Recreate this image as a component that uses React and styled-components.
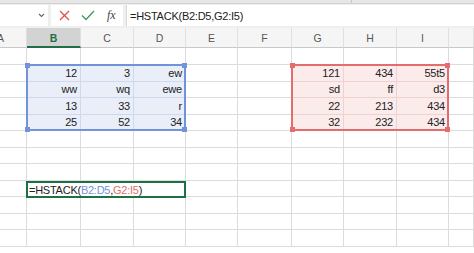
import React from 'react';
import styled, { createGlobalStyle, css } from 'styled-components';

const GlobalStyle = createGlobalStyle`
  html, body {
    margin: 0;
    padding: 0;
    background: #ffffff;
    overflow: hidden;
  }
  body {
    font-family: "Liberation Sans", Arial, sans-serif;
  }
`;

const color = {
  grid: '#dcdcdc',
  header: '#f5f5f5',
  headerText: '#555555',
  green: '#1e6f43',
  blue: '#7193d9',
  blueFill: '#e9eef9',
  blueGrid: '#cfd8ec',
  red: '#e46c6c',
  redFill: '#fcebeb',
  redGrid: '#eed2d2',
};

// A is scrolled partly out of view, the last column runs past the right edge
const colWidths = [27, 54, 53, 52, 52, 54, 52, 53, 52, 25];
const rowHeights = [17, 17, 16, 17, 16, 17, 16, 17, 16, 17, 16, 17];
const letters = ['A', 'B', 'C', 'D', 'E', 'F', 'G', 'H', 'I', ''];

const data = {
  B2: '12', C2: '3', D2: 'ew',
  B3: 'ww', C3: 'wq', D3: 'ewe',
  B4: '13', C4: '33', D4: 'r',
  B5: '25', C5: '52', D5: '34',
  G2: '121', H2: '434', I2: '55t5',
  G3: 'sd', H3: 'ff', I3: 'd3',
  G4: '22', H4: '213', I4: '434',
  G5: '32', H5: '232', I5: '434',
};

const rangeOf = (col, row) => {
  if (row >= 2 && row <= 5 && col >= 1 && col <= 3) return 'blue';
  if (row >= 2 && row <= 5 && col >= 6 && col <= 8) return 'red';
  return null;
};

const Page = styled.div`
  width: 474px;
  height: 253px;
  display: flex;
  flex-direction: column;
  overflow: hidden;
`;

const RibbonEdge = styled.div`
  height: 3px;
  background: #e6e6e6;
  border-bottom: 1px solid #d2d2d2;
  display: flex;
  justify-content: flex-end;
  padding-right: 122px;
`;

const RibbonDivider = styled.div`
  width: 1px;
  background: #c8c8c8;
`;

const FormulaBar = styled.div`
  height: 24px;
  box-sizing: border-box;
  padding: 1px 0 2px;
  background: #efefef;
  display: flex;
  gap: 3px;
`;

const NameBox = styled.div`
  width: 48px;
  background: #ffffff;
  display: flex;
  align-items: center;
  justify-content: flex-end;
  padding-right: 3px;
  box-sizing: border-box;
`;

const FnButtons = styled.div`
  width: 72px;
  background: #ffffff;
  display: flex;
  align-items: center;
  padding-left: 8px;
  gap: 11px;
  box-sizing: border-box;
`;

const FxLabel = styled.span`
  font-family: "Liberation Serif", "Times New Roman", serif;
  font-style: italic;
  font-size: 12px;
  color: #444;
  margin-left: 1px;
`;

const FormulaInput = styled.div`
  flex: 1;
  background: #ffffff;
  border-left: 1px solid #d8d8d8;
  display: flex;
  align-items: center;
  padding-left: 3px;
  font-size: 11px;
  letter-spacing: -0.25px;
  color: #222;
`;

const Sheet = styled.div`
  display: grid;
  grid-template-columns: ${colWidths.map((w) => `${w}px`).join(' ')};
  grid-template-rows: 20px ${rowHeights.map((h) => `${h}px`).join(' ')};
`;

const HeaderCell = styled.div`
  grid-column: ${(p) => p.col + 1};
  grid-row: 1;
  box-sizing: border-box;
  background: ${(p) => (p.active ? '#d3d3d3' : color.header)};
  border-right: 1px solid #e0e0e0;
  border-bottom: ${(p) => (p.active ? `2px solid ${color.green}` : '1px solid #c9c9c9')};
  color: ${(p) => (p.active ? color.green : color.headerText)};
  font-weight: ${(p) => (p.active ? 700 : 400)};
  font-size: 10.5px;
  display: flex;
  align-items: center;
  justify-content: ${(p) => (p.edge ? 'flex-start' : 'center')};
  padding-top: 1px;
  ${(p) => p.edge && css`text-indent: -3px;`}
`;

const Cell = styled.div`
  grid-column: ${(p) => p.col + 1};
  grid-row: ${(p) => p.row + 1};
  box-sizing: border-box;
  border-right: 1px solid ${(p) => (p.range === 'blue' ? color.blueGrid : p.range === 'red' ? color.redGrid : color.grid)};
  border-bottom: 1px solid ${(p) => (p.range === 'blue' ? color.blueGrid : p.range === 'red' ? color.redGrid : color.grid)};
  background: ${(p) => (p.range === 'blue' ? color.blueFill : p.range === 'red' ? color.redFill : '#ffffff')};
  font-size: 11px;
  letter-spacing: -0.2px;
  color: #222;
  display: flex;
  align-items: flex-end;
  justify-content: flex-end;
  padding: 0 3px 2px 0;
  white-space: nowrap;
  overflow: hidden;
`;

const RangeBox = styled.div`
  grid-column: ${(p) => p.cols};
  grid-row: ${(p) => p.rows};
  margin: -1px 0 0 -1px;
  border: 2px solid ${(p) => p.tone};
  position: relative;
  pointer-events: none;
  z-index: 2;
`;

const Handle = styled.span`
  position: absolute;
  width: 5px;
  height: 5px;
  background: ${(p) => p.tone};
  ${(p) => (p.top ? 'top: -3px;' : 'bottom: -3px;')}
  ${(p) => (p.left ? 'left: -3px;' : 'right: -3px;')}
`;

const EditCell = styled.div`
  grid-column: 2 / 5;
  grid-row: 10 / 11;
  margin: 0 0 -1px -1px;
  border: 2px solid ${color.green};
  background: #ffffff;
  z-index: 3;
  display: flex;
  align-items: center;
  padding-left: 1px;
  font-size: 11px;
  letter-spacing: -0.25px;
  color: #222;
  white-space: nowrap;
`;

const Ref = styled.span`
  color: ${(p) => p.tone};
`;

const Chevron = () => (
  <svg width="7" height="5" viewBox="0 0 7 5">
    <polyline points="1,1 3.5,3.5 6,1" fill="none" stroke="#666" strokeWidth="1.1" />
  </svg>
);

const CancelIcon = () => (
  <svg width="11" height="11" viewBox="0 0 11 11">
    <path d="M1 1 L10 10 M10 1 L1 10" stroke="#e0514e" strokeWidth="1.3" fill="none" />
  </svg>
);

const EnterIcon = () => (
  <svg width="14" height="11" viewBox="0 0 14 11">
    <polyline points="1,5.5 5,9.5 13,1" stroke="#3d9a5c" strokeWidth="1.3" fill="none" />
  </svg>
);

const RangeOutline = ({ cols, rows, tone }) => (
  <RangeBox cols={cols} rows={rows} tone={tone}>
    <Handle tone={tone} top left />
    <Handle tone={tone} top />
    <Handle tone={tone} left />
    <Handle tone={tone} />
  </RangeBox>
);

export default function App() {
  const cells = [];
  for (let r = 1; r <= rowHeights.length; r++) {
    for (let c = 0; c < letters.length; c++) {
      const key = `${letters[c]}${r}`;
      cells.push(
        <Cell key={`${c}-${r}`} col={c} row={r} range={rangeOf(c, r)}>
          {data[key] || ''}
        </Cell>
      );
    }
  }

  return (
    <Page>
      <GlobalStyle />
      <RibbonEdge>
        <RibbonDivider />
      </RibbonEdge>
      <FormulaBar>
        <NameBox>
          <Chevron />
        </NameBox>
        <FnButtons>
          <CancelIcon />
          <EnterIcon />
          <FxLabel>fx</FxLabel>
        </FnButtons>
        <FormulaInput>=HSTACK(B2:D5,G2:I5)</FormulaInput>
      </FormulaBar>
      <Sheet>
        {letters.map((l, i) => (
          <HeaderCell key={i} col={i} active={l === 'B'} edge={i === 0}>
            {l}
          </HeaderCell>
        ))}
        {cells}
        <RangeOutline cols="2 / 5" rows="3 / 7" tone={color.blue} />
        <RangeOutline cols="7 / 10" rows="3 / 7" tone={color.red} />
        <EditCell>
          =HSTACK(<Ref tone={color.blue}>B2:D5</Ref>,<Ref tone={color.red}>G2:I5</Ref>)
        </EditCell>
      </Sheet>
    </Page>
  );
}
